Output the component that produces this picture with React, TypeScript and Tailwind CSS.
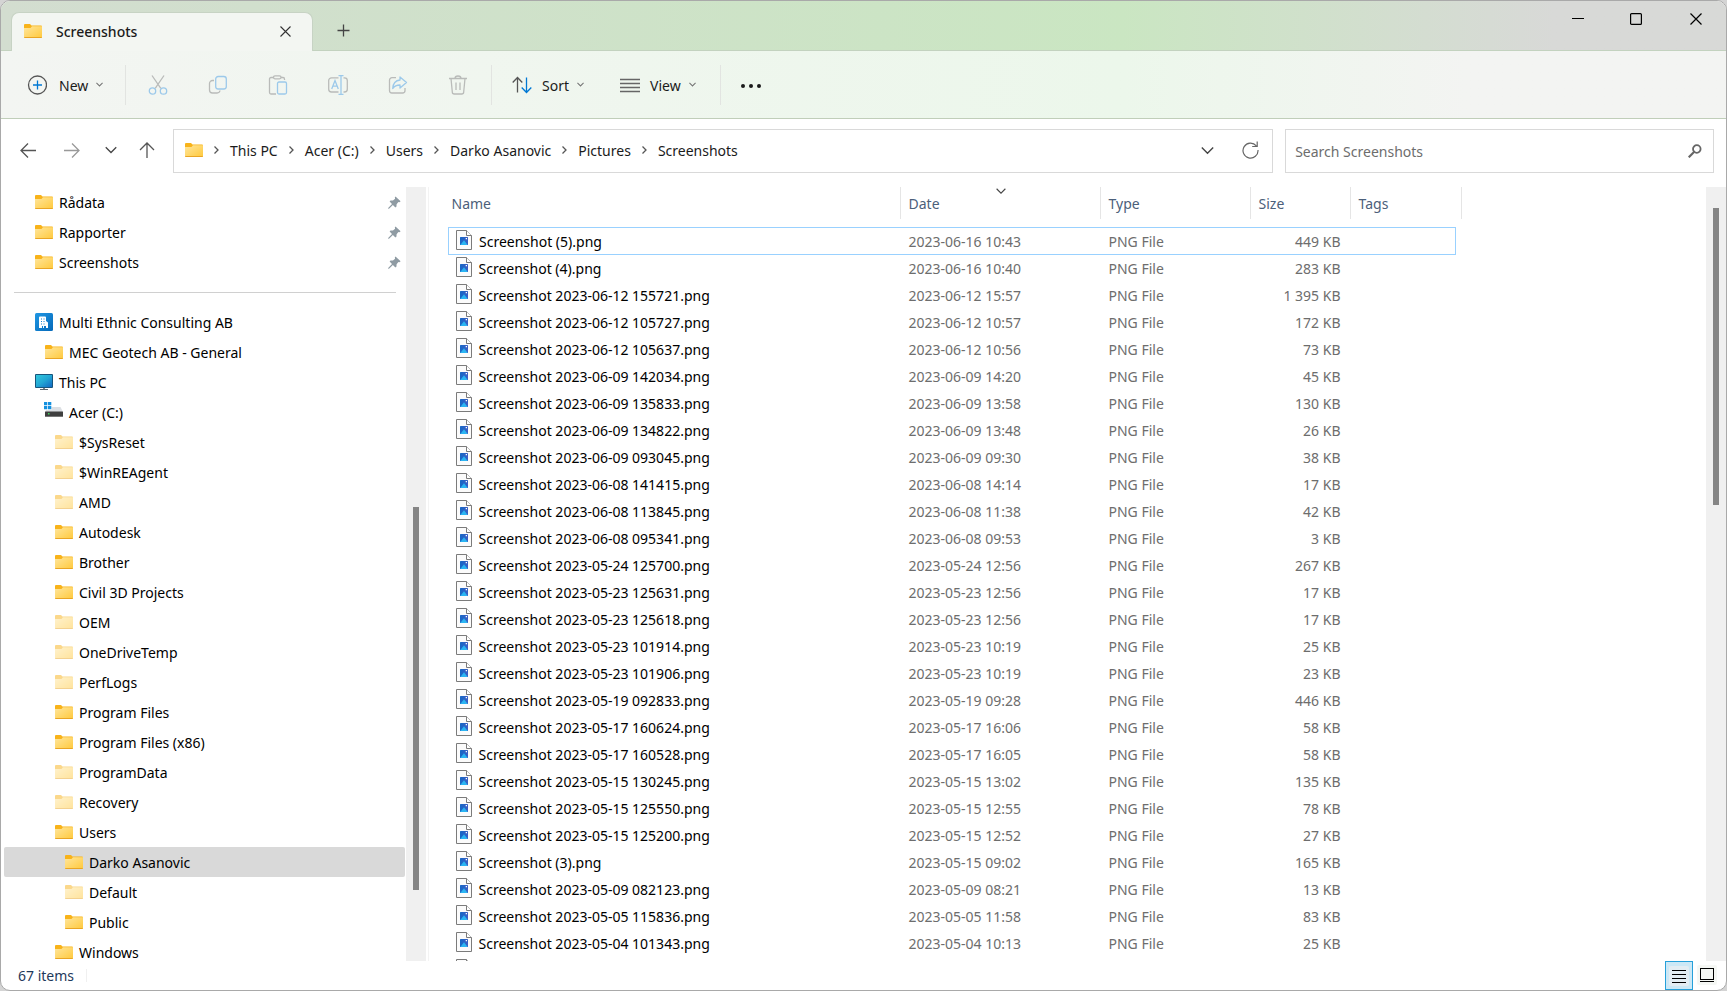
import type { ReactNode } from 'react';

type FolderItem = {
  name: string;
  level: number;
  icon: 'folder' | 'faded' | 'building' | 'pc' | 'drive';
  selected?: boolean;
};

const pinned = ['Rådata', 'Rapporter', 'Screenshots'];

const tree: FolderItem[] = [
  { name: 'Multi Ethnic Consulting AB', level: 0, icon: 'building' },
  { name: 'MEC Geotech AB - General', level: 1, icon: 'folder' },
  { name: 'This PC', level: 0, icon: 'pc' },
  { name: 'Acer (C:)', level: 1, icon: 'drive' },
  { name: '$SysReset', level: 2, icon: 'faded' },
  { name: '$WinREAgent', level: 2, icon: 'faded' },
  { name: 'AMD', level: 2, icon: 'faded' },
  { name: 'Autodesk', level: 2, icon: 'folder' },
  { name: 'Brother', level: 2, icon: 'folder' },
  { name: 'Civil 3D Projects', level: 2, icon: 'folder' },
  { name: 'OEM', level: 2, icon: 'faded' },
  { name: 'OneDriveTemp', level: 2, icon: 'faded' },
  { name: 'PerfLogs', level: 2, icon: 'faded' },
  { name: 'Program Files', level: 2, icon: 'folder' },
  { name: 'Program Files (x86)', level: 2, icon: 'folder' },
  { name: 'ProgramData', level: 2, icon: 'faded' },
  { name: 'Recovery', level: 2, icon: 'faded' },
  { name: 'Users', level: 2, icon: 'folder' },
  { name: 'Darko Asanovic', level: 3, icon: 'folder', selected: true },
  { name: 'Default', level: 3, icon: 'faded' },
  { name: 'Public', level: 3, icon: 'folder' },
  { name: 'Windows', level: 2, icon: 'folder' },
];

const indent = ['pl-[34px]', 'pl-[44px]', 'pl-[54px]', 'pl-[64px]'];

const crumbs = ['This PC', 'Acer (C:)', 'Users', 'Darko Asanovic', 'Pictures', 'Screenshots'];

const files = [
  { name: 'Screenshot (5).png', date: '2023-06-16 10:43', size: '449 KB' },
  { name: 'Screenshot (4).png', date: '2023-06-16 10:40', size: '283 KB' },
  { name: 'Screenshot 2023-06-12 155721.png', date: '2023-06-12 15:57', size: '1 395 KB' },
  { name: 'Screenshot 2023-06-12 105727.png', date: '2023-06-12 10:57', size: '172 KB' },
  { name: 'Screenshot 2023-06-12 105637.png', date: '2023-06-12 10:56', size: '73 KB' },
  { name: 'Screenshot 2023-06-09 142034.png', date: '2023-06-09 14:20', size: '45 KB' },
  { name: 'Screenshot 2023-06-09 135833.png', date: '2023-06-09 13:58', size: '130 KB' },
  { name: 'Screenshot 2023-06-09 134822.png', date: '2023-06-09 13:48', size: '26 KB' },
  { name: 'Screenshot 2023-06-09 093045.png', date: '2023-06-09 09:30', size: '38 KB' },
  { name: 'Screenshot 2023-06-08 141415.png', date: '2023-06-08 14:14', size: '17 KB' },
  { name: 'Screenshot 2023-06-08 113845.png', date: '2023-06-08 11:38', size: '42 KB' },
  { name: 'Screenshot 2023-06-08 095341.png', date: '2023-06-08 09:53', size: '3 KB' },
  { name: 'Screenshot 2023-05-24 125700.png', date: '2023-05-24 12:56', size: '267 KB' },
  { name: 'Screenshot 2023-05-23 125631.png', date: '2023-05-23 12:56', size: '17 KB' },
  { name: 'Screenshot 2023-05-23 125618.png', date: '2023-05-23 12:56', size: '17 KB' },
  { name: 'Screenshot 2023-05-23 101914.png', date: '2023-05-23 10:19', size: '25 KB' },
  { name: 'Screenshot 2023-05-23 101906.png', date: '2023-05-23 10:19', size: '23 KB' },
  { name: 'Screenshot 2023-05-19 092833.png', date: '2023-05-19 09:28', size: '446 KB' },
  { name: 'Screenshot 2023-05-17 160624.png', date: '2023-05-17 16:06', size: '58 KB' },
  { name: 'Screenshot 2023-05-17 160528.png', date: '2023-05-17 16:05', size: '58 KB' },
  { name: 'Screenshot 2023-05-15 130245.png', date: '2023-05-15 13:02', size: '135 KB' },
  { name: 'Screenshot 2023-05-15 125550.png', date: '2023-05-15 12:55', size: '78 KB' },
  { name: 'Screenshot 2023-05-15 125200.png', date: '2023-05-15 12:52', size: '27 KB' },
  { name: 'Screenshot (3).png', date: '2023-05-15 09:02', size: '165 KB' },
  { name: 'Screenshot 2023-05-09 082123.png', date: '2023-05-09 08:21', size: '13 KB' },
  { name: 'Screenshot 2023-05-05 115836.png', date: '2023-05-05 11:58', size: '83 KB' },
  { name: 'Screenshot 2023-05-04 101343.png', date: '2023-05-04 10:13', size: '25 KB' },
];

function FolderIcon({ faded = false }: { faded?: boolean }) {
  return (
    <svg width="18" height="14" viewBox="0 0 18 14" className={faded ? 'shrink-0 opacity-50' : 'shrink-0'}>
      <defs>
        <linearGradient id="folderFill" x1="0" y1="0" x2="1" y2="1">
          <stop offset="0" stopColor="#ffe69c" />
          <stop offset="1" stopColor="#ffc93c" />
        </linearGradient>
      </defs>
      <path d="M0 1a1 1 0 0 1 1-1h5l1.5 1.5H17a1 1 0 0 1 1 1V5H0z" fill="#f8b31a" />
      <path d="M0 4h6.5L8 2.3h10V13a1 1 0 0 1-1 1H1a1 1 0 0 1-1-1z" fill="url(#folderFill)" />
      <path d="M0 13h18a1 1 0 0 1-1 1H1a1 1 0 0 1-1-1z" fill="#e9a524" />
    </svg>
  );
}

function BuildingIcon() {
  return (
    <svg width="18" height="18" viewBox="0 0 18 18" className="shrink-0">
      <defs>
        <linearGradient id="buildingFill" x1="0" y1="0" x2="1" y2="1">
          <stop offset="0" stopColor="#1f97e4" />
          <stop offset="1" stopColor="#0569b9" />
        </linearGradient>
      </defs>
      <rect width="18" height="18" rx="1.5" fill="url(#buildingFill)" />
      <path d="M4 15V4.5a1 1 0 0 1 1-1h5a1 1 0 0 1 1 1V8l2 1.5V15h-2v-2H9v2H8v-2H7v2z" fill="#fff" />
      <path d="M6 5.5h1v1H6zM8.5 5.5h1v1h-1zM6 8h1v1H6zM8.5 8h1v1h-1zM6 10.5h1v1H6zM8.5 10.5h1v1h-1z" fill="#1480d0" />
    </svg>
  );
}

function PcIcon() {
  return (
    <svg width="18" height="16" viewBox="0 0 18 16" className="shrink-0">
      <defs>
        <linearGradient id="pcFill" x1="0" y1="0" x2="1" y2="1">
          <stop offset="0" stopColor="#31c7dc" />
          <stop offset="0.5" stopColor="#22a7d4" />
          <stop offset="1" stopColor="#1168c4" />
        </linearGradient>
      </defs>
      <rect x="0" y="0" width="18" height="14" rx="1" fill="#17557c" />
      <rect x="1" y="1" width="16" height="12" fill="url(#pcFill)" />
      <path d="M8 14h2v1H8z" fill="#7a868d" />
      <path d="M5 15h8v1H5z" fill="#5c676e" />
    </svg>
  );
}

function DriveIcon() {
  return (
    <svg width="19" height="20" viewBox="0 0 19 20" className="-ml-px shrink-0">
      <path d="M4 5h12.5L19 10H1z" fill="#dcdfe3" />
      <rect x="1" y="9.5" width="18" height="5.5" rx="0.5" fill="#3f3f3f" />
      <path d="M1 14h18v1H1z" fill="#777" />
      <rect x="4" y="11" width="1.5" height="1.5" fill="#3fd35c" />
      <rect x="0" y="0" width="7.5" height="8" fill="#fff" />
      <path d="M0 0h3.3v3.3H0zM4 0h3.3v3.3H4zM0 4h3.3v3.3H0zM4 4h3.3v3.3H4z" fill="#1490df" />
    </svg>
  );
}

function PinIcon() {
  return (
    <svg width="13" height="13" viewBox="0 0 13 13" className="shrink-0">
      <path d="M7.5 0.5 12.600 5.300 11.400 6.200 10.400 6.100 8.600 8.200 8.500 10.600 7.400 11.400 4.900 9 1 12.800 0.200 12.800 0.200 12 4 8.100 1.600 5.600 2.500 4.600 5 4.600 7.100 2.800 6.800 1.500z" fill="#8f9ba3" />
    </svg>
  );
}

function ImageFileIcon() {
  return (
    <svg width="16" height="20" viewBox="0 0 16 20" className="mb-[2px] shrink-0">
      <defs>
        <linearGradient id="imageFill" x1="0" y1="0" x2="1" y2="0">
          <stop offset="0" stopColor="#1668c6" />
          <stop offset="1" stopColor="#3b5fc4" />
        </linearGradient>
      </defs>
      <path d="M0.5 0.5h10l5 5v14h-15z" fill="#fbfbfb" stroke="#7b7b7b" />
      <path d="M10.5 0.5v5h5" fill="#fff" stroke="#7b7b7b" />
      <rect x="4" y="7" width="8" height="8" rx="0.5" fill="url(#imageFill)" />
      <path d="M4.300 15 8 10.200 11.700 15z" fill="#2bb5f2" />
      <path d="M9.700 8h1.300v1.300H9.700z" fill="#fff" />
    </svg>
  );
}

function Chevron({ className = 'text-[#777]', size = 7 }: { className?: string; size?: number }) {
  return (
    <svg width={size} height={size} viewBox="0 0 8 8" fill="none" stroke="currentColor" className={className}>
      <path d="M0.5 2.2 4 5.7 7.5 2.2" strokeWidth={size > 8 ? 0.85 : 1.2} />
    </svg>
  );
}

function Stroke({ children, size = 20 }: { children: ReactNode; size?: number }) {
  return (
    <svg width={size} height={size} viewBox={`0 0 ${size} ${size}`} fill="none" strokeWidth="1.3" className="shrink-0">
      {children}
    </svg>
  );
}

const gray = '#b9bbb9';
const blue = '#9cc9ea';

const fileActions = [
  {
    label: 'Cut',
    icon: (
      <Stroke>
        <path d="M4 0.5 12.800 13.300M16 0.5 7.200 13.300" stroke={gray} />
        <circle cx="4.500" cy="16" r="3.2" stroke={blue} />
        <circle cx="15.500" cy="16" r="3.2" stroke={blue} />
      </Stroke>
    ),
  },
  {
    label: 'Copy',
    icon: (
      <Stroke>
        <path d="M6 5.5H4.500a3 3 0 0 0-3 3V15a3 3 0 0 0 3 3H9a3 3 0 0 0 3-2.500" stroke={gray} />
        <rect x="7.7" y="1.5" width="10.6" height="12.5" rx="2.5" stroke={blue} />
      </Stroke>
    ),
  },
  {
    label: 'Paste',
    icon: (
      <Stroke>
        <path d="M6 2.5H3a1.5 1.5 0 0 0-1.5 1.5v13.5A1.5 1.5 0 0 0 3 19h5M13 2.5h2a1.5 1.5 0 0 1 1.5 1.5v1" stroke={gray} />
        <rect x="5.5" y="0.8" width="7.5" height="3" rx="1.5" stroke={gray} />
        <rect x="9.5" y="7" width="9" height="12" rx="1.5" stroke={blue} />
      </Stroke>
    ),
  },
  {
    label: 'Rename',
    icon: (
      <Stroke>
        <path d="M10.5 2.8H3.500A2.800 2.800 0 0 0 0.700 5.600v8.600A2.800 2.800 0 0 0 3.500 17h7M15.500 2.800h1A2.800 2.800 0 0 1 19.300 5.600v8.600A2.800 2.800 0 0 1 16.500 17h-1" stroke={gray} />
        <path d="M3.700 14 7 5.500 10.300 14M4.800 11.200h4.400M10.500 0.700h5M13 0.700v18.600M10.500 19.300h5" stroke={blue} />
      </Stroke>
    ),
  },
  {
    label: 'Share',
    icon: (
      <Stroke>
        <path d="M8 2.700H4A2.500 2.500 0 0 0 1.500 5.200V15.500A2.500 2.500 0 0 0 4 18h10.500A2.500 2.500 0 0 0 17 15.500V13" stroke={gray} />
        <path d="M12 2 18.500 7.500 12 13V10C8.500 10 6.500 11 4.700 13.500 5 9 7.500 5.500 12 5z" stroke={blue} strokeLinejoin="round" />
      </Stroke>
    ),
  },
  {
    label: 'Delete',
    icon: (
      <Stroke>
        <path d="M1 3.500h18M7 3.500a3 2.500 0 0 1 6 0M3 3.500 4.300 17A2 2 0 0 0 6.300 19h7.400a2 2 0 0 0 2-2L17 3.500M8 7.500v7.500M12 7.500v7.500" stroke={gray} />
      </Stroke>
    ),
  },
];

function Separator() {
  return <div className="h-10 w-px bg-[#e2e4e1]" />;
}

function TitleBar() {
  return (
    <header className="flex h-[50px] shrink-0 items-end border-b border-[#c3d2bf] bg-linear-to-r from-[#d3ddd0] via-[#cae6c2] via-65% to-[#d8d9d7] to-90%">
      <div className="relative z-10 -mb-px ml-[10px] flex h-[39px] w-[302px] items-center rounded-t-lg border border-b-0 border-[#c7d3c4] bg-[#f3f6f2] pb-[2px] pl-3 pr-[21px]">
        <FolderIcon />
        <span className="ml-[14px] flex-1 text-[14px] font-medium text-[#1b1b1b]">Screenshots</span>
        <button type="button" aria-label="Close tab">
          <svg width="11" height="11" viewBox="0 0 11 11" stroke="#333" strokeWidth="1.1">
            <path d="M0.5 0.5 10.5 10.5M10.5 0.5 0.5 10.5" />
          </svg>
        </button>
      </div>
      <button type="button" aria-label="New tab" className="ml-6 flex h-[37px] items-center pb-[2px]">
        <svg width="13" height="13" viewBox="0 0 13 13" stroke="#444" strokeWidth="1.3">
          <path d="M6.5 0.5v12M0.5 6.5h12" />
        </svg>
      </button>
      <div className="ml-auto flex self-start">
        <button type="button" aria-label="Minimize" className="flex h-9 w-[58px] items-center justify-center">
          <svg width="12" height="12" viewBox="0 0 12 12" stroke="#000">
            <path d="M0 5.5h12" />
          </svg>
        </button>
        <button type="button" aria-label="Maximize" className="flex h-9 w-[58px] items-center justify-center">
          <svg width="12" height="12" viewBox="0 0 12 12" fill="none" stroke="#000" strokeWidth="1.2">
            <rect x="0.6" y="0.6" width="10.8" height="10.8" rx="1" />
          </svg>
        </button>
        <button type="button" aria-label="Close" className="flex h-9 w-[61px] items-center justify-center">
          <svg width="12" height="12" viewBox="0 0 12 12" stroke="#000" strokeWidth="1.2">
            <path d="M0.5 0.5 11.5 11.5M11.5 0.5 0.5 11.5" />
          </svg>
        </button>
      </div>
    </header>
  );
}

function Toolbar() {
  return (
    <div className="flex h-[68px] shrink-0 items-center border-b border-[#c0ceb9] bg-linear-to-r from-[#f3f5f2] via-[#ecf7eb] via-65% to-[#f3f4f2] to-85% text-[14px] text-[#1b1b1b]">
      <button type="button" className="flex h-10 w-[124px] items-center pl-[26px]">
        <Stroke>
          <circle cx="10.500" cy="10" r="9" stroke="#555" />
          <path d="M10.500 5.500v9M6 10h9" stroke="#0078d4" />
        </Stroke>
        <span className="ml-3 mr-2 mt-[2px]">New</span>
        <Chevron />
      </button>
      <Separator />
      <div className="flex pl-[2px] pr-[3px]">
        {fileActions.map((action) => (
          <button key={action.label} type="button" aria-label={action.label} className="flex h-10 w-[60px] items-center justify-center">
            {action.icon}
          </button>
        ))}
      </div>
      <Separator />
      <button type="button" className="flex h-10 w-[108px] items-center pl-5">
        <Stroke>
          <path d="M5.500 17.500V2.500M0.700 7.500 5.500 2.500 10.300 7.500" stroke="#555" />
          <path d="M14.500 2.500v15M9.700 12.500 14.500 17.500 19.300 12.500" stroke="#0078d4" />
        </Stroke>
        <span className="ml-[10px] mr-2 mt-[2px]">Sort</span>
        <Chevron />
      </button>
      <button type="button" className="flex h-10 w-[120px] items-center pl-5">
        <Stroke>
          <path d="M0 4.500h20M0 8.500h20M0 12.500h20M0 16.500h20" stroke="#666" />
        </Stroke>
        <span className="ml-[10px] mr-2 mt-[2px]">View</span>
        <Chevron />
      </button>
      <Separator />
      <button type="button" aria-label="See more" className="flex h-10 items-center px-5 pt-[2px]">
        <svg width="20" height="4" viewBox="0 0 20 4" fill="#1b1b1b">
          <circle cx="2" cy="2" r="2" />
          <circle cx="10" cy="2" r="2" />
          <circle cx="18" cy="2" r="2" />
        </svg>
      </button>
    </div>
  );
}

function AddressBar() {
  return (
    <div className="flex shrink-0 items-center px-3 pt-[10px] pb-[14px] text-[14px]">
      <div className="flex w-40 items-center pb-[2px] pl-[7px]">
        <button type="button" aria-label="Back">
          <svg width="16" height="16" viewBox="0 0 16 16" fill="none" stroke="#555" strokeWidth="1.3">
            <path d="M16 8.500H1M8 1.500 1 8.500l7 7" />
          </svg>
        </button>
        <button type="button" aria-label="Forward" className="ml-7">
          <svg width="16" height="16" viewBox="0 0 16 16" fill="none" stroke="#999" strokeWidth="1.3">
            <path d="M0 8.500h15M8 1.500l7 7-7 7" />
          </svg>
        </button>
        <button type="button" aria-label="Recent locations" className="ml-[25px]">
          <Chevron size={12} className="text-[#444]" />
        </button>
        <button type="button" aria-label="Up" className="ml-[22px]">
          <svg width="16" height="16" viewBox="0 0 16 16" fill="none" stroke="#555" strokeWidth="1.3">
            <path d="M8 16V1M1 8l7-7 7 7" />
          </svg>
        </button>
      </div>
      <div className="flex h-11 flex-[1072] items-center border border-[#d9d9d9] pb-[2px] pl-[11px] pr-[13px]">
        <FolderIcon />
        <nav aria-label="Address" className="flex flex-1 items-center">
          {crumbs.map((crumb) => (
            <div key={crumb} className="flex items-center">
              <svg width="5" height="8" viewBox="0 0 5 8" fill="none" stroke="#555" strokeWidth="1.3" className="mx-[11px]">
                <path d="M0.5 0.5 4 4 0.5 7.5" />
              </svg>
              <a href="#" className="text-[#1b1b1b]">{crumb}</a>
            </div>
          ))}
        </nav>
        <button type="button" aria-label="Previous locations" className="mr-7">
          <Chevron size={13} className="text-[#444]" />
        </button>
        <button type="button" aria-label="Refresh">
          <svg width="17" height="18" viewBox="0 0 17 18" fill="none" stroke="#666" strokeWidth="1.2">
            <path d="M14.300 4.800A7.500 7.500 0 1 0 16 9M15.200 0.500v5h-5" />
          </svg>
        </button>
      </div>
      <div className="ml-3 flex h-11 flex-[406] items-center border border-[#d9d9d9] pl-[9px] pr-[11px]">
        <input
          type="text"
          aria-label="Search Screenshots"
          placeholder="Search Screenshots"
          className="w-full min-w-0 flex-1 outline-none placeholder:text-[#6d6d6d]"
        />
        <button type="button" aria-label="Search">
          <svg width="14" height="14" viewBox="0 0 14 14" fill="none" stroke="#666">
            <circle cx="8.800" cy="5" r="3.800" strokeWidth="1.800" />
            <path d="M6 8 0.700 13.300" strokeWidth="2.200" />
          </svg>
        </button>
      </div>
    </div>
  );
}

function TreeIcon({ icon }: { icon: FolderItem['icon'] }) {
  if (icon === 'building') return <BuildingIcon />;
  if (icon === 'pc') return <PcIcon />;
  if (icon === 'drive') return <DriveIcon />;
  return <FolderIcon faded={icon === 'faded'} />;
}

function Sidebar() {
  return (
    <aside className="flex w-[428px] shrink-0 border-r border-[#f3f3f3] pr-[2px] text-[14px] text-black">
      <div className="min-w-0 flex-1 overflow-hidden pr-px">
        {pinned.map((name) => (
          <a key={name} href="#" className="flex h-[30px] items-center pl-[34px] pr-1">
            <FolderIcon />
            <span className="ml-[6px] flex-1">{name}</span>
            <PinIcon />
          </a>
        ))}
        <div className="flex h-[30px] items-center pl-[13px] pr-[9px]">
          <hr className="flex-1 border-[#d0d0d0]" />
        </div>
        {tree.map((item) => (
          <div key={item.name} className={item.selected ? 'relative before:absolute before:inset-y-0 before:left-[3px] before:right-0 before:rounded-xs before:bg-[#d9d9d9]' : ''}>
            <a href="#" className={`relative flex h-[30px] items-center ${indent[item.level]}`}>
              <TreeIcon icon={item.icon} />
              <span className="ml-[6px]">{item.name}</span>
            </a>
          </div>
        ))}
      </div>
      <div className="flex w-5 flex-col items-center bg-[#f0f0f0]">
        <div className="flex-[320]" />
        <div className="w-[6px] flex-[383] bg-[#858585]" />
        <div className="flex-[71]" />
      </div>
    </aside>
  );
}

const headCell = 'flex h-8 items-center border-r border-[#e5e5e5] pl-2';

function FileList() {
  return (
    <main className="flex min-w-0 flex-1">
      <div className="min-w-0 flex-1 overflow-hidden pl-[19px]">
        <table className="w-[1013px] table-fixed text-left text-[14px] text-[#6d6d6d]">
          <colgroup>
            <col className="w-[452px]" />
            <col className="w-[200px]" />
            <col className="w-[150px]" />
            <col className="w-[100px]" />
            <col className="w-[105px]" />
            <col className="w-[6px]" />
          </colgroup>
          <thead className="text-[#4c607a]">
            <tr className="h-10 align-top">
              <th className="p-0 font-normal">
                <div className="flex h-8 items-center border-r border-[#e5e5e5] pl-[3px]">Name</div>
              </th>
              <th className="relative p-0 font-normal" aria-sort="descending">
                <div className={headCell}>Date</div>
                <Chevron size={10} className="absolute left-1/2 -top-px -translate-x-1/2 text-[#444]" />
              </th>
              <th className="p-0 font-normal">
                <div className={headCell}>Type</div>
              </th>
              <th className="p-0 font-normal">
                <div className={headCell}>Size</div>
              </th>
              <th className="p-0 font-normal" colSpan={2}>
                <div className={headCell}>Tags</div>
              </th>
            </tr>
          </thead>
          <tbody>
            {files.map((file, i) => {
              const edge = i === 0 ? 'border-y border-[#99d1ff]' : '';
              return (
                <tr key={file.name} className="h-[27px]">
                  <td className={`p-0 pt-px ${edge} ${i === 0 ? 'border-l' : ''}`}>
                    <div className="flex items-center gap-[7px] pl-[7px]">
                      <ImageFileIcon />
                      <span className="text-black">{file.name}</span>
                    </div>
                  </td>
                  <td className={`pt-px pb-0 pl-2 ${edge}`}>{file.date}</td>
                  <td className={`pt-px pb-0 pl-2 ${edge}`}>PNG File</td>
                  <td className={`pt-px pb-0 pr-[10px] text-right ${edge}`}>{file.size}</td>
                  <td className={`p-0 ${edge} ${i === 0 ? 'border-r' : ''}`} />
                  <td className="p-0" />
                </tr>
              );
            })}
            <tr className="h-[27px]">
              <td className="p-0 pl-[7px]">
                <ImageFileIcon />
              </td>
            </tr>
          </tbody>
        </table>
      </div>
      <div className="flex w-5 flex-col items-center bg-[#f0f0f0]">
        <div className="flex-[21]" />
        <div className="w-[6px] flex-[297] bg-[#858585]" />
        <div className="flex-[456]" />
      </div>
    </main>
  );
}

function StatusBar() {
  return (
    <footer className="flex h-[29px] shrink-0 items-center pl-[17px] pr-[9px] text-[14px] text-[#1e395b]">
      <span>67 items</span>
      <div className="ml-3 h-[13px] w-px bg-[#f0f0f0]" />
      <button type="button" aria-label="Details view" className="ml-auto flex h-full w-7 items-center justify-center border border-[#26a0da] bg-[#cce8f6]">
        <svg width="20" height="20" viewBox="0 0 20 20" stroke="#000">
          <rect width="20" height="20" rx="2" fill="#e3edf3" stroke="none" />
          <path d="M3 4.5h14M3 8.5h14M3 12.5h14M3 16.5h14" />
        </svg>
      </button>
      <button type="button" aria-label="Large thumbnails view" className="ml-1 pb-[2px]">
        <svg width="20" height="20" viewBox="0 0 20 20" fill="none" stroke="#000">
          <rect width="20" height="20" rx="2" fill="#f5f7f4" stroke="none" />
          <rect x="3.5" y="3.5" width="13" height="11" />
          <path d="M3 16.5h14" />
        </svg>
      </button>
    </footer>
  );
}

export default function App() {
  return (
    <div className="h-screen bg-[#d4d4d4]">
      <div className="flex h-full flex-col overflow-hidden rounded-[10px] border border-[#a9a9a9] bg-white font-['Noto_Sans','Open_Sans',sans-serif]">
        <TitleBar />
        <Toolbar />
        <AddressBar />
        <div className="flex min-h-0 flex-1">
          <Sidebar />
          <FileList />
        </div>
        <StatusBar />
      </div>
    </div>
  );
}
